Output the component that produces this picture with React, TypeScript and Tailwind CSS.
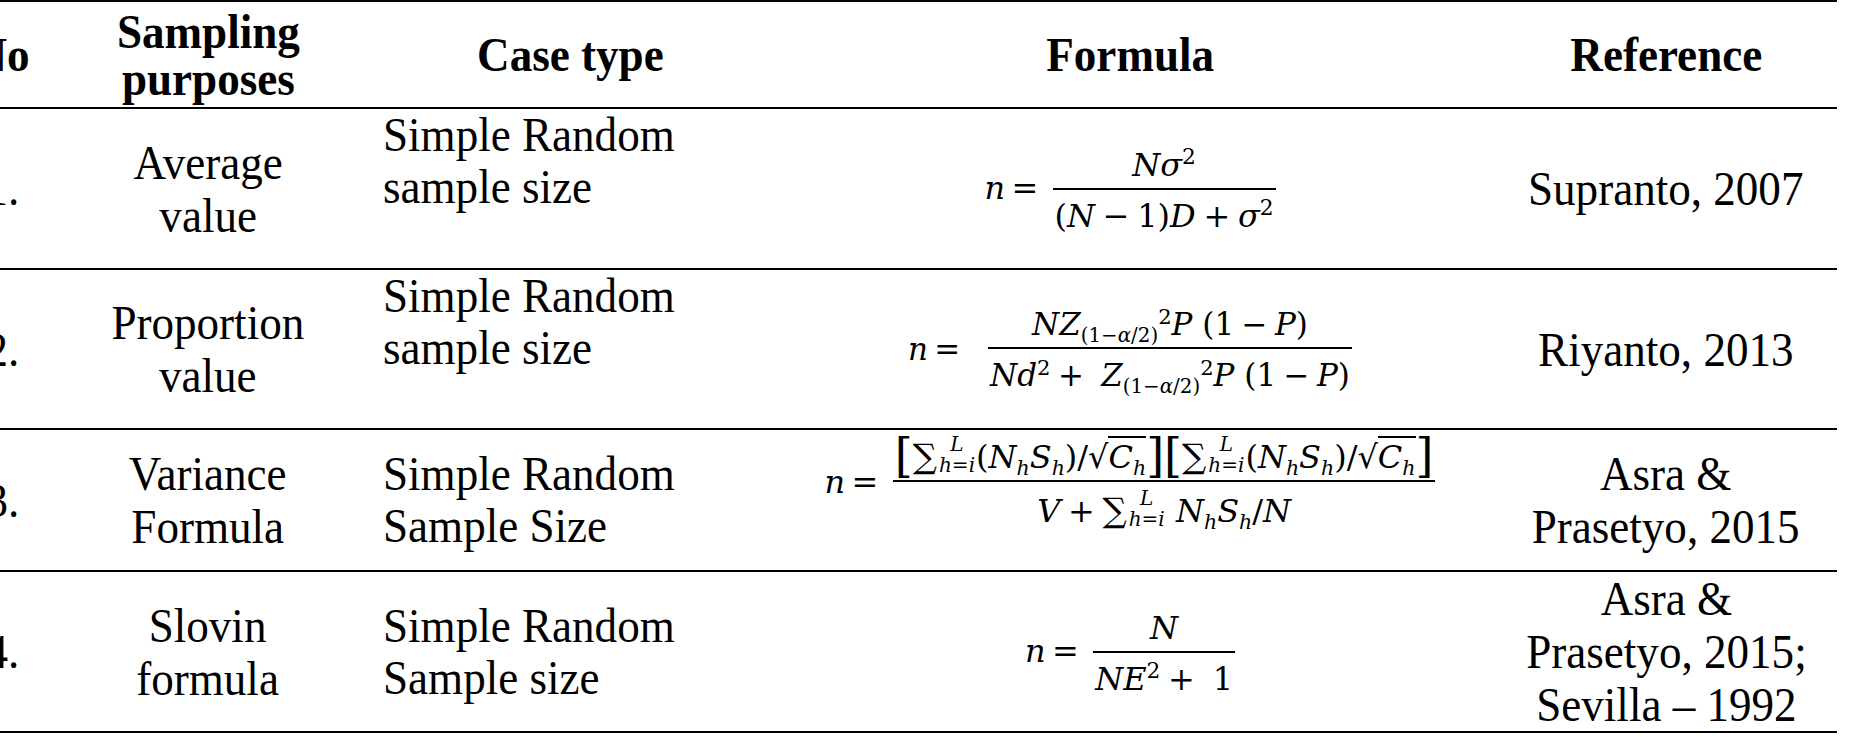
import React from "react";

type Kids = { children?: React.ReactNode };

// math helpers (Cambria Math look-alike)
const I = ({ children }: Kids) => <span className="italic">{children}</span>;
const Sup = ({ children }: Kids) => <span className="align-super text-[0.68em] leading-none not-italic">{children}</span>;
const Sub = ({ children }: Kids) => <span className="align-sub text-[0.64em] leading-none">{children}</span>;
const Op = ({ children }: Kids) => <span className="mx-[0.24em] not-italic">{children}</span>;

const Frac = ({ num, den }: { num: React.ReactNode; den: React.ReactNode }) => (
  <span className="inline-flex flex-col items-stretch">
    <span className="px-[2px] text-center leading-[46px] whitespace-nowrap">{num}</span>
    <span className="h-[2px] bg-black" />
    <span className="px-[2px] pt-[6px] text-center leading-[40px] whitespace-nowrap">{den}</span>
  </span>
);

const Eq = ({ children, cls = "text-[32px]", gap = "mr-[0.45em]" }: Kids & { cls?: string; gap?: string }) => (
  <div className={`flex items-center font-['DejaVu_Serif',serif] whitespace-nowrap ${cls}`}>
    <span className="italic">n</span>
    <span className={`ml-[0.2em] ${gap}`}>=</span>
    {children}
  </div>
);

const Zsub = () => (
  <>
    <I>Z</I>
    <Sub>
      (1−<I>α</I>/2)
    </Sub>
    <Sup>2</Sup>
  </>
);

const Sum = () => (
  <span className="whitespace-nowrap">
    <span className="text-[34px] leading-none">∑</span>
    <span className="ml-[2px] mr-[1px] inline-flex flex-col align-[17px] text-[20px] leading-[21px]">
      <I>L</I>
      <span>
        <I>h</I>=<I>i</I>
      </span>
    </span>
  </span>
);

const Root = () => (
  <span className="whitespace-nowrap">
    <span>√</span>
    <span className="border-t-2 border-black">
      <I>C</I>
      <Sub>
        <I>h</I>
      </Sub>
    </span>
  </span>
);

const Bracket = () => (
  <>
    <span className="align-[-4px] text-[46px] leading-none">[</span>
    <Sum />
    (<I>N</I>
    <Sub>
      <I>h</I>
    </Sub>
    <I>S</I>
    <Sub>
      <I>h</I>
    </Sub>
    )/
    <Root />
    <span className="align-[-4px] text-[46px] leading-none">]</span>
  </>
);

const formulas = [
  <Eq>
    <Frac
      num={
        <>
          <I>Nσ</I>
          <Sup>2</Sup>
        </>
      }
      den={
        <>
          (<I>N</I>
          <Op>−</Op>1)<I>D</I>
          <Op>+</Op>
          <I>σ</I>
          <Sup>2</Sup>
        </>
      }
    />
  </Eq>,
  <Eq cls="text-[31px]" gap="mr-[0.9em]">
    <Frac
      num={
        <>
          <I>N</I>
          <Zsub />
          <I>P</I> (1<Op>−</Op>
          <I>P</I>)
        </>
      }
      den={
        <>
          <I>Nd</I>
          <Sup>2</Sup>
          <Op>+</Op> <Zsub />
          <I>P</I> (1<Op>−</Op>
          <I>P</I>)
        </>
      }
    />
  </Eq>,
  <Eq>
    <Frac
      num={
        <>
          <Bracket />
          <Bracket />
        </>
      }
      den={
        <>
          <I>V</I>
          <Op>+</Op>
          <Sum /> <I>N</I>
          <Sub>
            <I>h</I>
          </Sub>
          <I>S</I>
          <Sub>
            <I>h</I>
          </Sub>
          /<I>N</I>
        </>
      }
    />
  </Eq>,
  <Eq>
    <Frac
      num={<I>N</I>}
      den={
        <>
          <I>NE</I>
          <Sup>2</Sup>
          <Op>+</Op> 1
        </>
      }
    />
  </Eq>,
];

const cols = "grid grid-cols-[78px_334px_390px_730px_342px]";

const rows = [
  {
    no: "1.",
    purpose: ["Average", "value"],
    caseType: ["Simple Random", "sample size"],
    ref: ["Supranto, 2007"],
    row: "h-[161px]",
    caseCls: "items-start",
    fCls: "items-center",
  },
  {
    no: "2.",
    purpose: ["Proportion", "value"],
    caseType: ["Simple Random", "sample size"],
    ref: ["Riyanto, 2013"],
    row: "h-[160px]",
    caseCls: "items-start",
    fCls: "items-center",
  },
  {
    no: "3.",
    purpose: ["Variance", "Formula"],
    caseType: ["Simple Random", "Sample Size"],
    ref: ["Asra &", "Prasetyo, 2015"],
    row: "h-[142px]",
    caseCls: "items-center",
    fCls: "items-start pt-[3px]",
  },
  {
    no: "4.",
    purpose: ["Slovin", "formula"],
    caseType: ["Simple Random", "Sample size"],
    ref: ["Asra &", "Prasetyo, 2015;", "Sevilla – 1992"],
    row: "h-[161px]",
    caseCls: "items-center",
    fCls: "items-center",
  },
];

// the source text is a little condensed, so it is drawn taller and squeezed
const Lines = ({ items, left }: { items: string[]; left?: boolean }) => (
  <div className={left ? "origin-left scale-x-[0.92] whitespace-nowrap leading-[52px]" : "scale-x-[0.92] whitespace-nowrap"}>
    {items.map((t) => (
      <div key={t}>{t}</div>
    ))}
  </div>
);

export default function App() {
  return (
    <div className="h-screen w-full overflow-hidden bg-white font-['Liberation_Serif','Times_New_Roman',serif] text-[49px] leading-[53px] text-black">
      <div className="-ml-[37px] w-[1874px]">
        <div className={`${cols} h-[109px] border-y-2 border-black font-bold`}>
          <div className="flex items-center justify-center">
            <Lines items={["No"]} />
          </div>
          <div className="flex items-center justify-center text-center leading-[47px]">
            <Lines items={["Sampling", "purposes"]} />
          </div>
          <div className="flex items-center justify-center">
            <Lines items={["Case type"]} />
          </div>
          <div className="flex items-center justify-center">
            <Lines items={["Formula"]} />
          </div>
          <div className="flex items-center justify-center">
            <Lines items={["Reference"]} />
          </div>
        </div>

        {rows.map((r, i) => (
          <div key={r.no} className={`${cols} ${r.row} border-b-2 border-black`}>
            <div className="flex items-center justify-center">
              <Lines items={[r.no]} />
            </div>
            <div className="flex items-center justify-center text-center">
              <Lines items={r.purpose} />
            </div>
            <div className={`flex pl-[8px] ${r.caseCls}`}>
              <Lines items={r.caseType} left />
            </div>
            <div className={`flex justify-center ${r.fCls}`}>{formulas[i]}</div>
            <div className="flex items-center justify-center text-center">
              <Lines items={r.ref} />
            </div>
          </div>
        ))}
      </div>
    </div>
  );
}
